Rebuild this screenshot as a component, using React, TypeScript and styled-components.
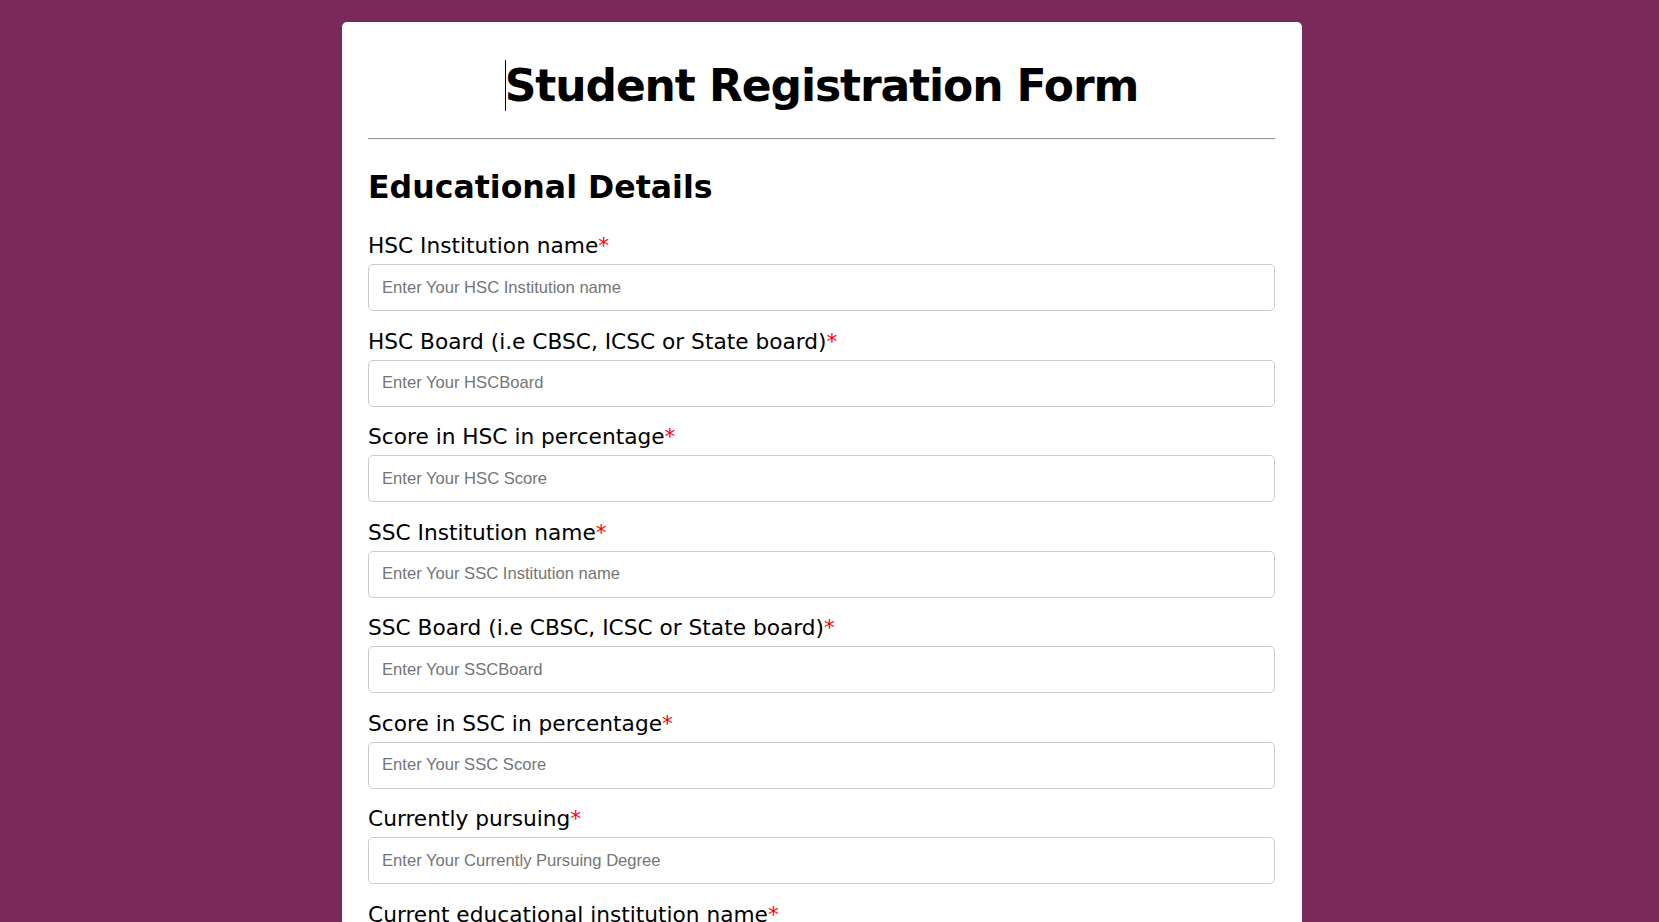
import styled, { createGlobalStyle } from 'styled-components';

const fields = [
  { label: 'HSC Institution name', placeholder: 'Enter Your HSC Institution name' },
  { label: 'HSC Board (i.e CBSC, ICSC or State board)', placeholder: 'Enter Your HSCBoard' },
  { label: 'Score in HSC in percentage', placeholder: 'Enter Your HSC Score' },
  { label: 'SSC Institution name', placeholder: 'Enter Your SSC Institution name' },
  { label: 'SSC Board (i.e CBSC, ICSC or State board)', placeholder: 'Enter Your SSCBoard' },
  { label: 'Score in SSC in percentage', placeholder: 'Enter Your SSC Score' },
  { label: 'Currently pursuing', placeholder: 'Enter Your Currently Pursuing Degree' },
  { label: 'Current educational institution name', placeholder: 'Enter Your Current Institution name' },
  { label: 'Year of passing', placeholder: 'Enter Your Year of passing' },
];

function App() {
  return (
    <>
      <GlobalStyle />
      <Page>
        <Card>
          <Title>
            <Caret />
            Student Registration Form
          </Title>
          <Divider />
          <SectionTitle>Educational Details</SectionTitle>
          {fields.map((f) => (
            <Field key={f.label}>
              <Label>
                {f.label}
                <Required>*</Required>
              </Label>
              <Input type="text" placeholder={f.placeholder} />
            </Field>
          ))}
        </Card>
      </Page>
    </>
  );
}

const GlobalStyle = createGlobalStyle`
    html, body {
      margin: 0;
      padding: 0;
      overflow: hidden;
      background: #7a2a5a;
    }
  `,
  Page = styled.div`
    min-height: 100vh;
    padding: 22px 15px 0 0;
    box-sizing: border-box;
    display: flex;
    justify-content: center;
    align-items: flex-start;
    background: #7a2a5a;
  `,
  Card = styled.div`
    width: 960px;
    box-sizing: border-box;
    background: #ffffff;
    border-radius: 5px;
    padding: 37px 27px 40px 26px;
    font-family: 'DejaVu Sans', Verdana, sans-serif;
    color: #000;
  `,
  Title = styled.h1`
    margin: 0;
    font-size: 44px;
    line-height: 54px;
    letter-spacing: -1.1px;
    font-weight: bold;
    text-align: center;
  `,
  Caret = styled.span`
    display: inline-block;
    width: 1px;
    height: 51px;
    margin-right: -1px;
    background: #000;
    vertical-align: -10px;
  `,
  Divider = styled.hr`
    margin: 25px 0 0;
    border: none;
    border-top: 1px solid #9a9a9a;
    border-bottom: 1px solid #eeeeee;
    height: 0;
  `,
  SectionTitle = styled.h2`
    margin: 28px 0 27px;
    font-size: 31.6px;
    line-height: 38px;
    font-weight: bold;
  `,
  Field = styled.div`
    display: flex;
    flex-direction: column;
    gap: 5px;
    margin-bottom: 17.5px;
  `,
  Label = styled.label`
    font-size: 21.7px;
    line-height: 26px;
    color: #000;
  `,
  Required = styled.span`
    color: #ff0000;
  `,
  Input = styled.input`
    height: 47px;
    box-sizing: border-box;
    width: 100%;
    border: 1px solid #cccccc;
    border-radius: 5px;
    padding: 0 13px;
    font-family: 'Liberation Sans', Arial, sans-serif;
    font-size: 16.6px;
    outline: none;

    &::placeholder {
      color: #757575;
    }
  `;

export default App;
